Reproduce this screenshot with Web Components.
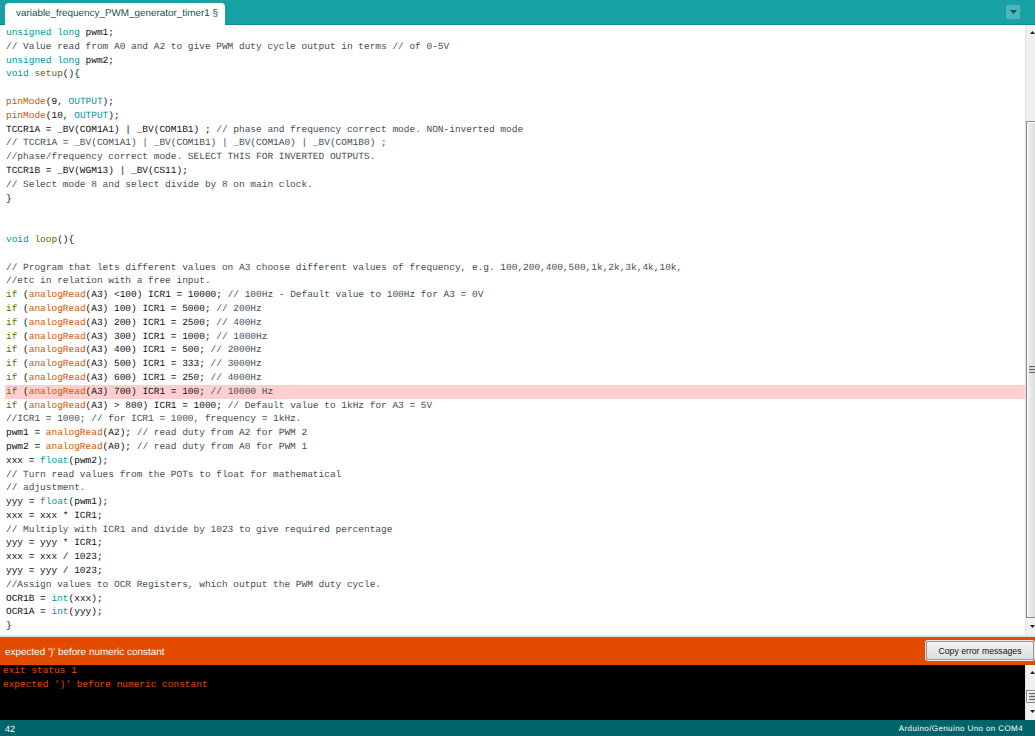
<!DOCTYPE html>
<html>
<head>
<meta charset="utf-8">
<title>Arduino IDE</title>
<style>
  html, body { margin: 0; height: 100%; }
  body { width: 1035px; height: 736px; overflow: hidden; display: flex; flex-direction: column; background: #fff; text-rendering: geometricPrecision; }
</style>
</head>
<body>
<ide-header title-text="variable_frequency_PWM_generator_timer1 §"></ide-header>
<ide-editor></ide-editor>
<ide-error-bar>expected ')' before numeric constant</ide-error-bar>
<ide-console></ide-console>
<ide-status line="42" board="Arduino/Genuino Uno on COM4"></ide-status>

<script>
const SKETCH = `unsigned long pwm1;
// Value read from A0 and A2 to give PWM duty cycle output in terms // of 0-5V
unsigned long pwm2;
void setup(){

pinMode(9, OUTPUT);
pinMode(10, OUTPUT);
TCCR1A = _BV(COM1A1) | _BV(COM1B1) ; // phase and frequency correct mode. NON-inverted mode
// TCCR1A = _BV(COM1A1) | _BV(COM1B1) | _BV(COM1A0) | _BV(COM1B0) ;
//phase/frequency correct mode. SELECT THIS FOR INVERTED OUTPUTS.
TCCR1B = _BV(WGM13) | _BV(CS11);
// Select mode 8 and select divide by 8 on main clock.
}


void loop(){

// Program that lets different values on A3 choose different values of frequency, e.g. 100,200,400,500,1k,2k,3k,4k,10k,
//etc in relation with a free input.
if (analogRead(A3) <100) ICR1 = 10000; // 100Hz - Default value to 100Hz for A3 = 0V
if (analogRead(A3) 100) ICR1 = 5000; // 200Hz
if (analogRead(A3) 200) ICR1 = 2500; // 400Hz
if (analogRead(A3) 300) ICR1 = 1000; // 1000Hz
if (analogRead(A3) 400) ICR1 = 500; // 2000Hz
if (analogRead(A3) 500) ICR1 = 333; // 3000Hz
if (analogRead(A3) 600) ICR1 = 250; // 4000Hz
if (analogRead(A3) 700) ICR1 = 100; // 10000 Hz
if (analogRead(A3) > 800) ICR1 = 1000; // Default value to 1kHz for A3 = 5V
//ICR1 = 1000; // for ICR1 = 1000, frequency = 1kHz.
pwm1 = analogRead(A2); // read duty from A2 for PWM 2
pwm2 = analogRead(A0); // read duty from A0 for PWM 1
xxx = float(pwm2);
// Turn read values from the POTs to float for mathematical
// adjustment.
yyy = float(pwm1);
xxx = xxx * ICR1;
// Multiply with ICR1 and divide by 1023 to give required percentage
yyy = yyy * ICR1;
xxx = xxx / 1023;
yyy = yyy / 1023;
//Assign values to OCR Registers, which output the PWM duty cycle.
OCR1B = int(xxx);
OCR1A = int(yyy);
}`;

const ERROR_LINE = 27;

function esc(s) {
  return s.replace(/&/g, "&amp;").replace(/</g, "&lt;").replace(/>/g, "&gt;");
}

function highlight(line) {
  const at = line.indexOf("//");
  const code = at < 0 ? line : line.slice(0, at);
  const comment = at < 0 ? "" : line.slice(at);
  const html = esc(code).replace(/\b(unsigned|long|void|float|int|OUTPUT|setup|loop|if|pinMode|analogRead)\b/g, (m) => {
    if (m === "setup" || m === "loop" || m === "if") return `<span class="fn">${m}</span>`;
    if (m === "pinMode" || m === "analogRead") return `<span class="call">${m}</span>`;
    return `<span class="kw">${m}</span>`;
  });
  return html + (comment ? `<span class="cm">${esc(comment)}</span>` : "");
}

class IdeHeader extends HTMLElement {
  connectedCallback() {
    this.attachShadow({ mode: "open" });
    this.shadowRoot.innerHTML = `
      <style>
        :host { display: flex; flex: none; height: 25px; box-sizing: border-box; background: #17a1a5; border-bottom: 1px solid #0e8c90; padding: 3px 15px 0 5px; justify-content: space-between; align-items: flex-start; }
        .tab { height: 22px; width: 220px; box-sizing: border-box; background: #fff; border-radius: 4px 4px 0 0; padding-left: 11px; color: #1d4f52; font: 9.9px/21px "Liberation Sans", sans-serif; white-space: nowrap; }
        .menu { width: 14px; height: 14px; margin-top: 2px; background: #4db6ba; display: flex; align-items: center; justify-content: center; }
      </style>
      <div class="tab">${this.getAttribute("title-text")}</div>
      <div class="menu"><svg width="7" height="4" viewBox="0 0 7 4"><path d="M0 0h7L3.5 4z" fill="#0d5c60"/></svg></div>`;
  }
}

class IdeScrollbar extends HTMLElement {
  connectedCallback() {
    this.attachShadow({ mode: "open" });
    this.shadowRoot.innerHTML = `
      <style>
        :host { display: flex; flex: none; flex-direction: column; width: 9px; background: #f0f0f0; border-left: 1px solid #e3e3e3; box-sizing: content-box; }
        .arrow { flex: none; height: 14px; display: flex; align-items: center; justify-content: flex-end; }
        .arrow.down { height: 17px; }
        .gap { flex: none; height: var(--before, 0); }
        .thumb { flex: 1; min-height: 0; background: linear-gradient(90deg, #f4f4f4, #dcdcdc); border: 1px solid #8a8a8a; border-right: 0; border-radius: 1px 0 0 1px; box-sizing: border-box; box-shadow: inset 1px 1px 0 #fbfbfb; display: flex; align-items: center; justify-content: flex-end; }
        .grip { width: 6px; height: 7px; background: repeating-linear-gradient(#666 0 1px, #d8d8d8 1px 3px); }
      </style>
      <div class="arrow"><svg width="5" height="3" viewBox="0 0 5 3"><path d="M0 3h5L2.5 0z" fill="#222"/></svg></div>
      <div class="gap"></div>
      <div class="thumb"><div class="grip"></div></div>
      <div class="arrow down"><svg width="5" height="3" viewBox="0 0 5 3"><path d="M0 0h5L2.5 3z" fill="#222"/></svg></div>`;
  }
}

class CodeLine extends HTMLElement {
  static get styles() {
    return `
      :host { display: block; height: 13.8px; line-height: 13.8px; padding-left: 1px; white-space: pre; }
      :host([error]) { background: #ffcfcf; }
      .kw { color: #00979c; }
      .fn { color: #5e6d03; }
      .call { color: #d35400; }
      .cm { color: #434f54; }
    `;
  }
  set code(text) {
    this.attachShadow({ mode: "open" });
    this.shadowRoot.innerHTML = `<style>${CodeLine.styles}</style>${highlight(text) || " "}`;
  }
}

class IdeEditor extends HTMLElement {
  connectedCallback() {
    this.attachShadow({ mode: "open" });
    this.shadowRoot.innerHTML = `
      <style>
        :host { display: flex; flex: none; height: 610px; background: #fff; }
        .code { flex: 1; min-width: 0; overflow: hidden; padding: 1px 0 0 5px; font: 9.48px "Liberation Mono", monospace; color: #111; }
        ide-scrollbar { --before: 82px; }
      </style>
      <div class="code"></div>
      <ide-scrollbar></ide-scrollbar>`;
    const host = this.shadowRoot.querySelector(".code");
    SKETCH.split("\n").forEach((text, i) => {
      const row = document.createElement("code-line");
      row.code = text;
      if (i + 1 === ERROR_LINE) row.setAttribute("error", "");
      host.append(row);
    });
  }
}

class IdeErrorBar extends HTMLElement {
  connectedCallback() {
    this.attachShadow({ mode: "open" });
    this.shadowRoot.innerHTML = `
      <style>
        :host { display: flex; flex: none; height: 30px; box-sizing: border-box; border-top: 2px solid #e3e3e3; background: #e34c00; align-items: center; justify-content: space-between; padding: 0 1px 0 5px; color: #fff; font: 9.95px/18px "Liberation Sans", sans-serif; }
        .msg { padding-top: 3px; }
        button { width: 108px; height: 19px; margin-top: -1px; padding: 0; box-sizing: border-box; border: 1px solid #9a9a9a; border-radius: 2px; background: linear-gradient(#f2f2f2, #dedede); box-shadow: 0 0 0 1px #e9e9e9; color: #111; font: 8.7px "Liberation Sans", sans-serif; }
      </style>
      <span class="msg"><slot></slot></span>
      <button>Copy error messages</button>`;
  }
}

class IdeConsole extends HTMLElement {
  connectedCallback() {
    this.attachShadow({ mode: "open" });
    this.shadowRoot.innerHTML = `
      <style>
        :host { display: flex; flex: none; height: 55px; background: #000; }
        pre { flex: 1; margin: -1px 0 0; padding: 0 0 0 3px; color: #e34c00; font: 9.48px/13.8px "Liberation Mono", monospace; }
        ide-scrollbar { --before: 11px; }
      </style>
      <pre>exit status 1
expected ')' before numeric constant</pre>
      <ide-scrollbar></ide-scrollbar>`;
  }
}

class IdeStatus extends HTMLElement {
  connectedCallback() {
    this.attachShadow({ mode: "open" });
    this.shadowRoot.innerHTML = `
      <style>
        :host { display: flex; flex: 1; background: #006468; color: #fff; justify-content: space-between; align-items: center; padding: 1px 12px 0 5px; font: 9px "Liberation Sans", sans-serif; }
        .board { font-size: 8px; letter-spacing: 0.4px; }
      </style>
      <span>${this.getAttribute("line")}</span>
      <span class="board">${this.getAttribute("board")}</span>`;
  }
}

customElements.define("ide-header", IdeHeader);
customElements.define("ide-scrollbar", IdeScrollbar);
customElements.define("code-line", CodeLine);
customElements.define("ide-editor", IdeEditor);
customElements.define("ide-error-bar", IdeErrorBar);
customElements.define("ide-console", IdeConsole);
customElements.define("ide-status", IdeStatus);
</script>
</body>
</html>
